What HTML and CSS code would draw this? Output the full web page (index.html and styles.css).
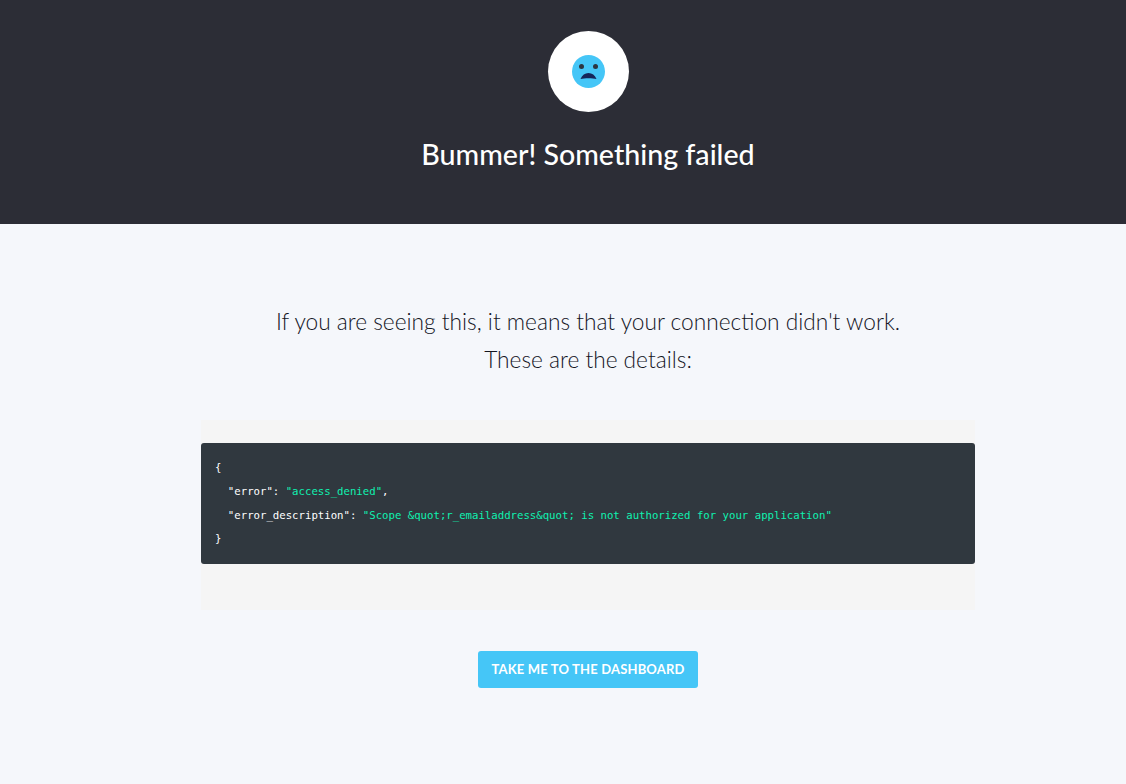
FILE: index.html
```html
<!DOCTYPE html>
<html lang="en">
<head>
<meta charset="utf-8">
<title>Bummer! Something failed</title>
<link rel="stylesheet" href="styles.css">
</head>
<body>
<header class="hero">
  <div class="badge">
    <svg class="face" viewBox="0 0 33 33" width="33" height="33" aria-hidden="true">
      <circle cx="16.500" cy="16.500" r="16.500" fill="#45c6f7"/>
      <circle cx="9.500" cy="11.500" r="2.500" fill="#2d3540"/>
      <circle cx="23.500" cy="11.500" r="2.500" fill="#2d3540"/>
      <path d="M8.500 24C10 20 13 18 16.500 18S23 20 24.500 24C20.500 23 12.500 23 8.500 24Z" fill="#14255a"/>
    </svg>
  </div>
  <h1 class="title">Bummer! Something failed</h1>
</header>
<main class="content">
  <p class="lead">If you are seeing this, it means that your connection didn't work.<br>These are the details:</p>
  <div class="panel">
<pre class="code">{
  "error": <span class="str">"access_denied"</span>,
  "error_description": <span class="str">"Scope &amp;quot;r_emailaddress&amp;quot; is not authorized for your application"</span>
}</pre>
  </div>
  <a class="btn" href="#">TAKE ME TO THE DASHBOARD</a>
</main>
</body>
</html>
```
FILE: styles.css
```css
* { box-sizing: border-box; }
html, body { margin: 0; padding: 0; }
body {
  background: #f5f7fb;
  font-family: "Lato", "Noto Sans", sans-serif;
  height: 784px;
  overflow: hidden;
}
.hero {
  height: 224px;
  background: #2c2d36;
  padding: 31px 0 0 50px;
  display: flex;
  flex-direction: column;
  align-items: center;
}
.badge {
  width: 81px;
  height: 81px;
  border-radius: 50%;
  background: #fff;
  display: flex;
  align-items: center;
  justify-content: center;
}
.face { display: block; }
.title {
  margin: 23px 0 0;
  color: #fff;
  font-size: 28.600px;
  line-height: 38px;
  font-weight: 500;
}
.content {
  padding: 79px 0 0 50px;
  display: flex;
  flex-direction: column;
  align-items: center;
}
.lead {
  margin: 0;
  text-align: center;
  color: #14151f;
  font-size: 22.700px;
  line-height: 38px;
  font-weight: 300;
}
.panel {
  margin-top: 41px;
  width: 774px;
  height: 190px;
  background: #f5f5f5;
  padding-top: 23px;
}
.code {
  margin: 0;
  height: 121px;
  padding: 13px 14px;
  background: #30383f;
  border-radius: 3px;
  color: #fff;
  font-family: "DejaVu Sans Mono", monospace;
  font-size: 10.680px;
  line-height: 23.800px;
}
.str { color: #0ff0b0; }
.btn {
  margin-top: 41px;
  width: 220px;
  height: 37px;
  background: #45c6f7;
  border-radius: 3px;
  color: #fff;
  font-size: 13px;
  font-weight: 700;
  letter-spacing: 0.17px;
  line-height: 37px;
  text-align: center;
  text-decoration: none;
}
```
